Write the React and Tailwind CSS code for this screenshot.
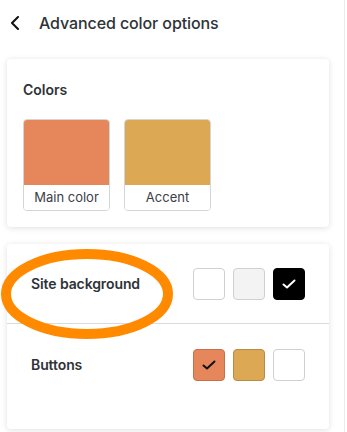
const Check = ({ color }) => (
  <svg width="16" height="16" viewBox="0 0 16 16" fill="none" stroke={color} strokeWidth="2" strokeLinecap="round" strokeLinejoin="round">
    <polyline points="2.5,8.5 6,11.5 13.5,4.5" />
  </svg>
);

const Swatch = ({ bg, border, checked, checkColor }) => (
  <div className={`w-8 h-8 rounded-[4px] border flex items-center justify-center ${bg} ${border}`}>
    {checked && <Check color={checkColor} />}
  </div>
);

const BigSwatch = ({ color, label }) => (
  <div className="w-[87px] h-[92px] rounded-[4px] border border-[#d3d6d9] overflow-hidden flex flex-col">
    <div className={`h-[65px] ${color}`} />
    <div className="flex-1 flex items-center justify-center pt-[1px] text-[13px] text-[#3b4045] bg-white">{label}</div>
  </div>
);

const App = () => {
  return (
    <div className="w-[347px] h-[432px] bg-white overflow-hidden relative" style={{ fontFamily: 'Inter, "Noto Sans", sans-serif' }}>
      <div className="w-[345px] h-full border-r border-[#ebebeb]">
        <div className="h-[45px] flex items-center pl-[10px] pt-[1px]">
          <svg width="10" height="14" viewBox="0 0 10 14" fill="none" stroke="#111" strokeWidth="2" strokeLinecap="round" strokeLinejoin="round">
            <polyline points="8,1 2,7 8,13" />
          </svg>
          <span className="ml-[19px] text-[16px] font-medium text-[#2e3338] tracking-[-0.1px]">Advanced color options</span>
        </div>

        <div className="mx-[7px] mt-[14px] w-[322px] h-[168px] rounded-[4px] bg-white shadow-[0_1px_6px_rgba(0,0,0,0.13)] px-4 pt-[21px]">
          <div className="text-[14px] font-semibold text-[#2e3338] leading-5">Colors</div>
          <div className="flex gap-[14px] mt-[19px]">
            <BigSwatch color="bg-[#e5875a]" label="Main color" />
            <BigSwatch color="bg-[#dca853]" label="Accent" />
          </div>
        </div>

        <div className="mx-[7px] mt-[17px] w-[322px] h-[185px] rounded-[4px] bg-white shadow-[0_1px_6px_rgba(0,0,0,0.13)]">
          <div className="h-[80px] flex items-center justify-between pl-6 pr-6 border-b border-[#d8dadc]">
            <span className="text-[14px] font-semibold text-[#2e3338] tracking-[-0.1px]">Site background</span>
            <div className="flex gap-2">
              <Swatch bg="bg-white" border="border-[#d0d0d0]" />
              <Swatch bg="bg-[#f3f3f3]" border="border-[#d0d0d0]" />
              <Swatch bg="bg-black" border="border-black" checked checkColor="#fff" />
            </div>
          </div>
          <div className="h-[81px] flex items-center justify-between pl-6 pr-6">
            <span className="text-[14px] font-semibold text-[#2e3338] tracking-[-0.1px]">Buttons</span>
            <div className="flex gap-2">
              <Swatch bg="bg-[#e5875a]" border="border-[#c4704a]" checked checkColor="#111" />
              <Swatch bg="bg-[#dca853]" border="border-[#b88c46]" />
              <Swatch bg="bg-white" border="border-[#d0d0d0]" />
            </div>
          </div>
        </div>
      </div>

      <svg className="absolute left-0 top-0 pointer-events-none" width="347" height="432">
        <ellipse cx="87" cy="294" rx="81" ry="40" fill="none" stroke="#ff8a00" strokeWidth="10" />
      </svg>
    </div>
  );
};

export default App;
